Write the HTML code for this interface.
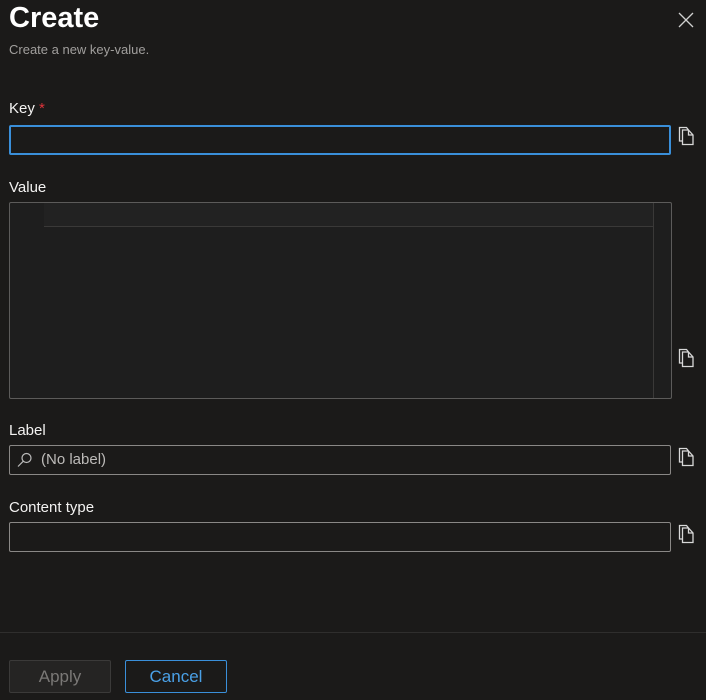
<!DOCTYPE html>
<html><head><style>
body{margin:0;width:706px;height:700px;background:#1b1a19;font-family:"Liberation Sans",sans-serif;position:relative;overflow:hidden;color:#fff}
.a{position:absolute}
.lbl{font-size:15px;color:#f3f2f1}
.inp{position:absolute;left:9px;width:660px;border:1px solid #8a8886;border-radius:2px;box-sizing:border-box}
.cp{position:absolute;left:678px;width:18px;height:20px}
</style></head><body>
<div class="a" style="left:9px;top:2px;font-size:29px;font-weight:bold">Create</div>
<div class="a" style="left:9px;top:42px;font-size:13px;color:#a19f9d">Create a new key-value.</div>
<svg class="a" style="left:678px;top:12px" width="16" height="16"><path d="M1 1L15 15M15 1L1 15" stroke="#d0d0d0" stroke-width="1.3"/></svg>
<div class="a lbl" style="left:9px;top:100px">Key <span style="color:#e0333a">*</span></div>
<div class="inp" style="top:125px;height:30px;border:2px solid #3a8fd9;width:662px"></div>
<div class="a lbl" style="left:9px;top:179px">Value</div>
<div class="inp" style="top:202px;height:197px;width:663px;border-color:#5c5b5a;background:#1e1e1e"></div>
<div class="a" style="left:44px;top:203px;width:609px;height:23px;background:#222"></div>
<div class="a" style="left:44px;top:226px;width:610px;height:1px;background:#3a3938"></div>
<div class="a" style="left:653px;top:203px;width:1px;height:195px;background:#3a3938"></div>
<div class="a lbl" style="left:9px;top:422px">Label</div>
<div class="inp" style="top:445px;height:30px;width:662px"></div>
<svg class="a" style="left:16px;top:451px" width="18" height="18"><circle cx="10.5" cy="7" r="4.5" fill="none" stroke="#bbb" stroke-width="1.2"/><path d="M7.3 10.2L2 15.5" stroke="#bbb" stroke-width="1.2"/></svg>
<div class="a" style="left:41px;top:451px;font-size:15px;color:#bdbbb9">(No label)</div>
<div class="a lbl" style="left:9px;top:499px">Content type</div>
<div class="inp" style="top:522px;height:30px;width:662px"></div>
<div class="a" style="left:0;top:632px;width:706px;height:1px;background:#2f2e2d"></div>
<div class="a" style="left:9px;top:660px;width:102px;height:33px;box-sizing:border-box;border:1px solid #3b3a39;border-radius:2px;background:#252423;color:#7a7876;font-size:17px;text-align:center;line-height:31px">Apply</div>
<div class="a" style="left:125px;top:660px;width:102px;height:33px;box-sizing:border-box;border:1px solid #3a8fd9;border-radius:2px;color:#4aa0e6;font-size:17px;text-align:center;line-height:31px">Cancel</div>
<svg class="cp" style="top:126px" viewBox="0 0 18 20"><path d="M1.5 1.5h7l2 2.5H4.5v11h-3z M4.5 4h6l4.5 5v9.5H4.5z M10.5 4v5H15" fill="none" stroke="#d8d8d8" stroke-width="1.3"/></svg>
<svg class="cp" style="top:348px" viewBox="0 0 18 20"><path d="M1.5 1.5h7l2 2.5H4.5v11h-3z M4.5 4h6l4.5 5v9.5H4.5z M10.5 4v5H15" fill="none" stroke="#d8d8d8" stroke-width="1.3"/></svg>
<svg class="cp" style="top:447px" viewBox="0 0 18 20"><path d="M1.5 1.5h7l2 2.5H4.5v11h-3z M4.5 4h6l4.5 5v9.5H4.5z M10.5 4v5H15" fill="none" stroke="#d8d8d8" stroke-width="1.3"/></svg>
<svg class="cp" style="top:524px" viewBox="0 0 18 20"><path d="M1.5 1.5h7l2 2.5H4.5v11h-3z M4.5 4h6l4.5 5v9.5H4.5z M10.5 4v5H15" fill="none" stroke="#d8d8d8" stroke-width="1.3"/></svg>
</body></html>
